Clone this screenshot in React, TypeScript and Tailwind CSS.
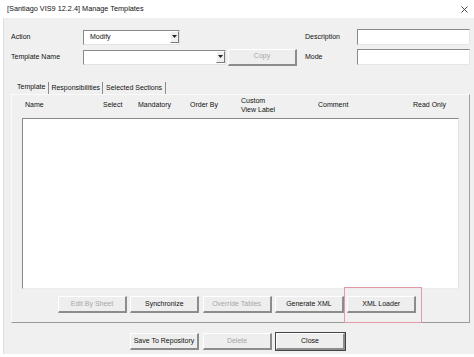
import React from "react";

const font = { fontFamily: '"Liberation Sans", Arial, sans-serif' };

const Btn = ({ label, disabled, def }: { label: string; disabled?: boolean; def?: boolean }) => {
  return (
    <div
      className={
        "w-[69px] h-[17px] flex items-center justify-center text-[7px] bg-[#eeeeee] border-t border-l border-t-[#ffffff] border-l-[#ffffff] border-b-2 border-r-2 border-b-[#8c8c8c] border-r-[#8c8c8c] " +
        (disabled ? "text-[#a6a6a6] " : "text-[#111111] ") +
        (def ? "outline outline-1 outline-[#444444]" : "")
      }
    >
      {label}
    </div>
  );
};

const Combo = ({ value, w }: { value?: string; w: string }) => {
  return (
    <div className={"h-[15px] flex bg-white border-t border-l border-[#8a8a8a] border-b border-r border-b-[#e2e2e2] border-r-[#e2e2e2] " + w}>
      <div className="flex-1 pl-[6px] text-[7px] leading-[11px] text-[#111]">{value}</div>
      <div className="w-[9px] h-[12px] mt-[0px] mr-[0px] bg-[#f0f0f0] border-t border-l border-t-white border-l-white border-b border-r border-b-[#7a7a7a] border-r-[#7a7a7a] flex items-center justify-center">
        <svg width="5" height="3" viewBox="0 0 5 3">
          <path d="M0 0 L5 0 L2.5 3 Z" fill="#222" />
        </svg>
      </div>
    </div>
  );
};

const Field = () => (
  <div className="w-[113px] h-[16px] bg-white border-t border-l border-[#8a8a8a] border-b border-r border-b-[#e6e6e6] border-r-[#e6e6e6]" />
);

const cols = [
  { label: "Name", w: "w-[78px]" },
  { label: "Select", w: "w-[35px]" },
  { label: "Mandatory", w: "w-[52px]" },
  { label: "Order By", w: "w-[51px]" },
  { label: "Custom\nView Label", w: "w-[77px]" },
  { label: "Comment", w: "w-[95px]" },
  { label: "Read Only", w: "w-[50px]" },
];

export default function App() {
  return (
    <div className="w-[474px] h-[357px] bg-white overflow-hidden text-[#111]" style={font}>
      <div className="h-[18px] flex items-center justify-between pl-[7px] pr-[6px]">
        <span className="text-[7.3px]">[Santiago VIS9 12.2.4] Manage Templates</span>
        <svg width="7" height="7" viewBox="0 0 7 7">
          <path d="M0.5 0.5 L6.5 6.5 M6.5 0.5 L0.5 6.5" stroke="#333" strokeWidth="0.9" />
        </svg>
      </div>

      <div className="relative ml-[3px] h-[336px] bg-[#f0f0f0] border-l border-l-[#dedede] pl-[7px]">
        <div className="flex items-center pt-[11px] h-[27px]">
          <div className="w-[72px] text-[7px]">Action</div>
          <Combo value="Modify" w="w-[97px]" />
          <div className="w-[125px]" />
          <div className="w-[52px] text-[7px]">Description</div>
          <Field />
        </div>
        <div className="flex items-center mt-[4px] h-[16px]">
          <div className="w-[72px] text-[7px]">Template Name</div>
          <Combo w="w-[143px]" />
          <div className="w-[2px]" />
          <Btn label="Copy" disabled />
          <div className="w-[8px]" />
          <div className="w-[52px] text-[7px]">Mode</div>
          <Field />
        </div>

        <div className="flex items-end h-[14px] mt-[15px] pl-[4px] text-[7px]">
          <div className="h-[14px] px-[2px] pt-[2px] bg-[#f0f0f0]">Template</div>
          <div className="h-[12px] ml-[1px] px-[2px] pt-[1px] border-l border-r border-[#8a8a8a]">Responsibilities</div>
          <div className="h-[12px] px-[3px] pt-[1px] border-r border-[#8a8a8a]">Selected Sections</div>
        </div>

        <div className="w-[459px] h-[229px] border-t border-l border-t-[#fafafa] border-l-[#fafafa] border-r border-b border-r-[#a0a0a0] border-b-[#9a9a9a] flex flex-col">
          <div className="flex items-center h-[19px] pl-[13px] text-[7px]">
            {cols.map((c) => (
              <div key={c.label} className={"whitespace-pre leading-[9px] " + c.w}>
                {c.label}
              </div>
            ))}
          </div>
          <div className="ml-[10px] mt-[4px] w-[437px] h-[171px] bg-white border-t border-l border-[#8a8a8a] border-b border-r border-b-[#ececec] border-r-[#e0e0e0]" />
          <div className="flex gap-[3.3px] ml-[46px] mt-[7px]">
            <Btn label="Edit By Sheet" disabled />
            <Btn label="Synchronize" />
            <Btn label="Override Tables" disabled />
            <Btn label="Generate XML" />
            <Btn label="XML Loader" />
          </div>
        </div>

        <div className="flex gap-[4px] ml-[119px] mt-[10px]">
          <Btn label="Save To Repository" />
          <Btn label="Delete" disabled />
          <Btn label="Close" def />
        </div>

        <div className="absolute left-[340px] top-[269px] w-[78px] h-[36px] border border-[#e29aa3]" />
      </div>
    </div>
  );
}
